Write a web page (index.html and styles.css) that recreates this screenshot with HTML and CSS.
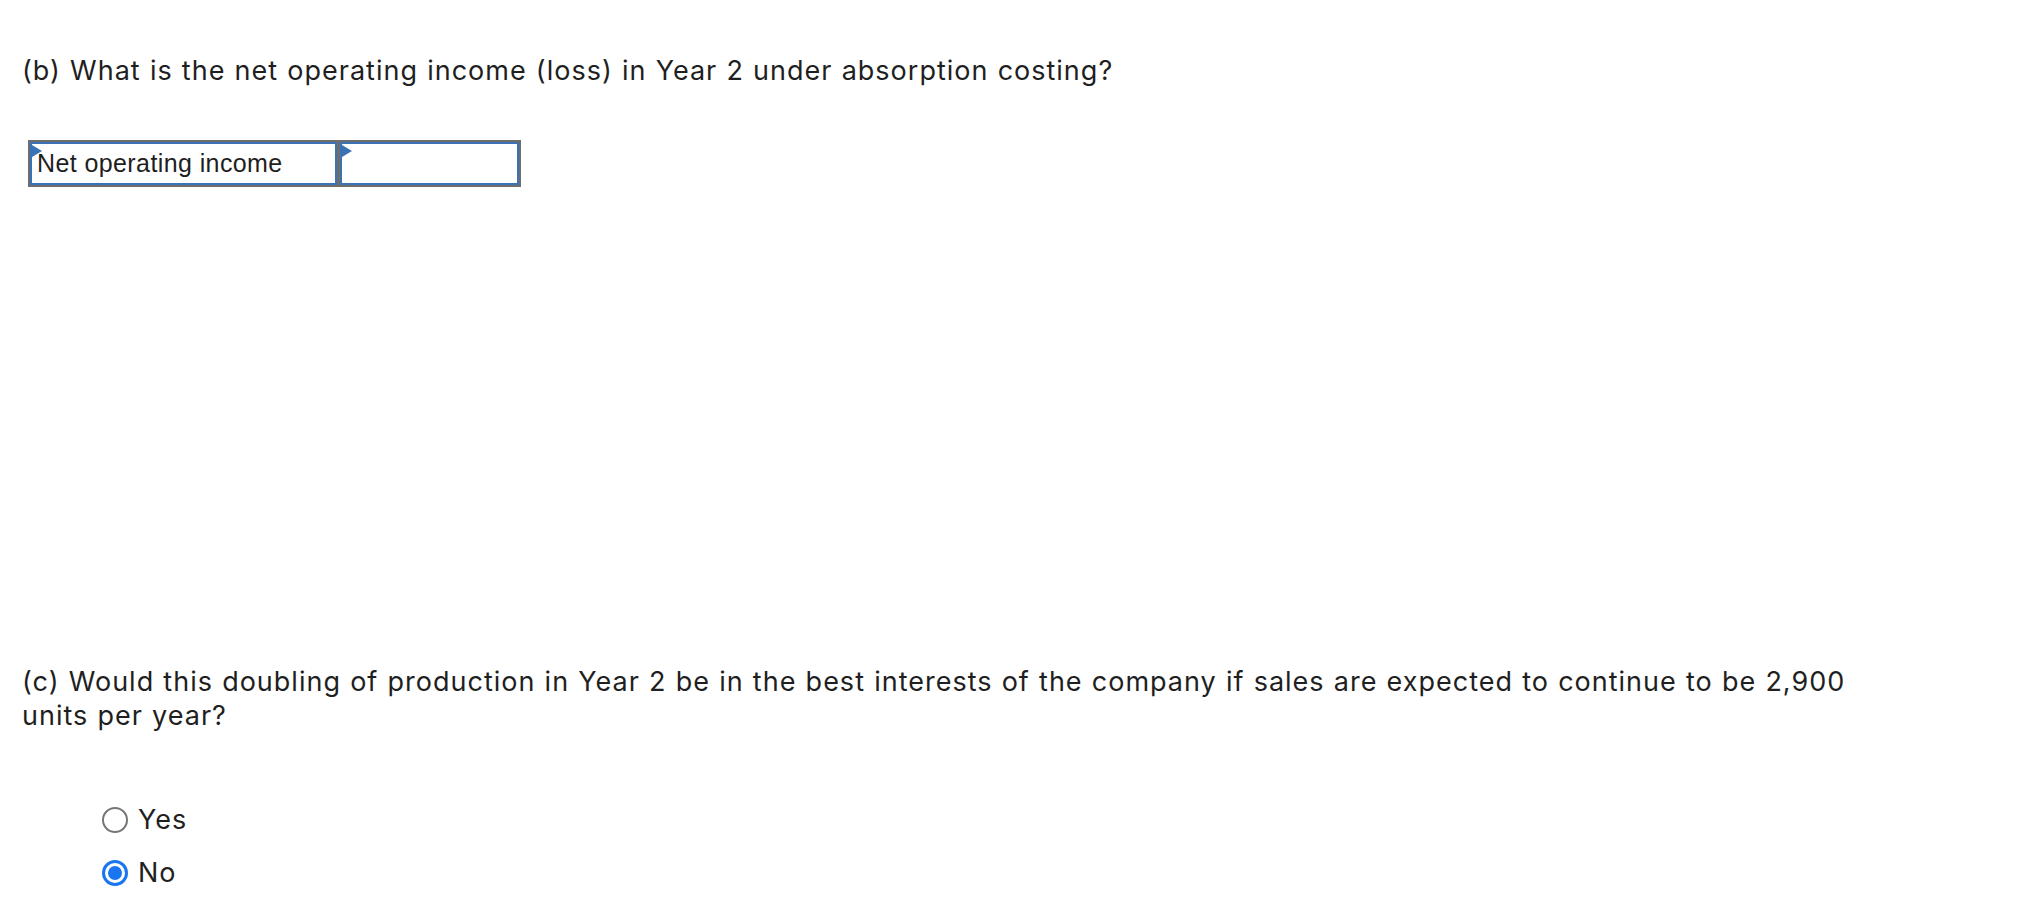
FILE: index.html
```html
<!DOCTYPE html>
<html lang="en">
<head>
<meta charset="utf-8">
<title>Absorption costing</title>
<link rel="stylesheet" href="styles.css">
</head>
<body>
<main class="page">
  <p class="question q-b">(b) What is the net operating income (loss) in Year 2 under absorption costing?</p>
  <div class="answer-table">
    <div class="cell cell-label">Net operating income</div>
    <div class="cell cell-input"></div>
  </div>
  <p class="question q-c">(c) Would this doubling of production in Year 2 be in the best interests of the company if sales are expected to continue to be 2,900 units per year?</p>
  <div class="options">
    <label class="option"><span class="radio"></span><span class="opt-text">Yes</span></label>
    <label class="option"><span class="radio checked"></span><span class="opt-text">No</span></label>
  </div>
</main>
</body>
</html>
```
FILE: styles.css
```css
html, body {
  margin: 0;
  padding: 0;
  background: #ffffff;
}
.page {
  padding-left: 22px;
  display: flex;
  flex-direction: column;
  align-items: flex-start;
  font-family: Inter, "Open Sans", sans-serif;
  color: #1f1f1f;
}
.question {
  margin: 0;
  font-size: 27px;
  letter-spacing: 1px;
  word-spacing: 0.6px;
  line-height: 34px;
  width: 1880px;
}
.q-b {
  margin-top: 54px;
}
.answer-table {
  margin-top: 52px;
  margin-left: 6px;
  display: flex;
  gap: 3px;
  background: #6e6e6e;
  border: 2px solid #6e6e6e;
}
.cell {
  position: relative;
  box-sizing: border-box;
  height: 43px;
  border: 2px solid #3a72b5;
  background: #ffffff;
  font-family: "Liberation Sans", Arial, sans-serif;
  font-size: 25px;
  letter-spacing: 0.4px;
  color: #1e1e1e;
  line-height: 39px;
  padding-left: 5px;
}
.cell::before {
  content: "";
  position: absolute;
  left: 0;
  top: 1px;
  width: 0;
  height: 0;
  border-top: 6.5px solid transparent;
  border-bottom: 6.5px solid transparent;
  border-left: 10px solid #3a72b5;
}
.cell-label {
  width: 307px;
}
.cell-input {
  width: 179px;
}
.q-c {
  margin-top: 478px;
}
.options {
  margin-top: 60px;
  margin-left: 80px;
  display: flex;
  flex-direction: column;
}
.option {
  display: flex;
  align-items: center;
  height: 53px;
  gap: 10px;
  font-size: 27px;
  letter-spacing: 1px;
}
.radio {
  box-sizing: border-box;
  width: 26px;
  height: 26px;
  border-radius: 50%;
  border: 2px solid #767676;
  background: #ffffff;
  display: flex;
  align-items: center;
  justify-content: center;
}
.radio.checked {
  border: 3px solid #1a76f0;
}
.radio.checked::after {
  content: "";
  width: 14px;
  height: 14px;
  border-radius: 50%;
  background: #1a76f0;
}
```
